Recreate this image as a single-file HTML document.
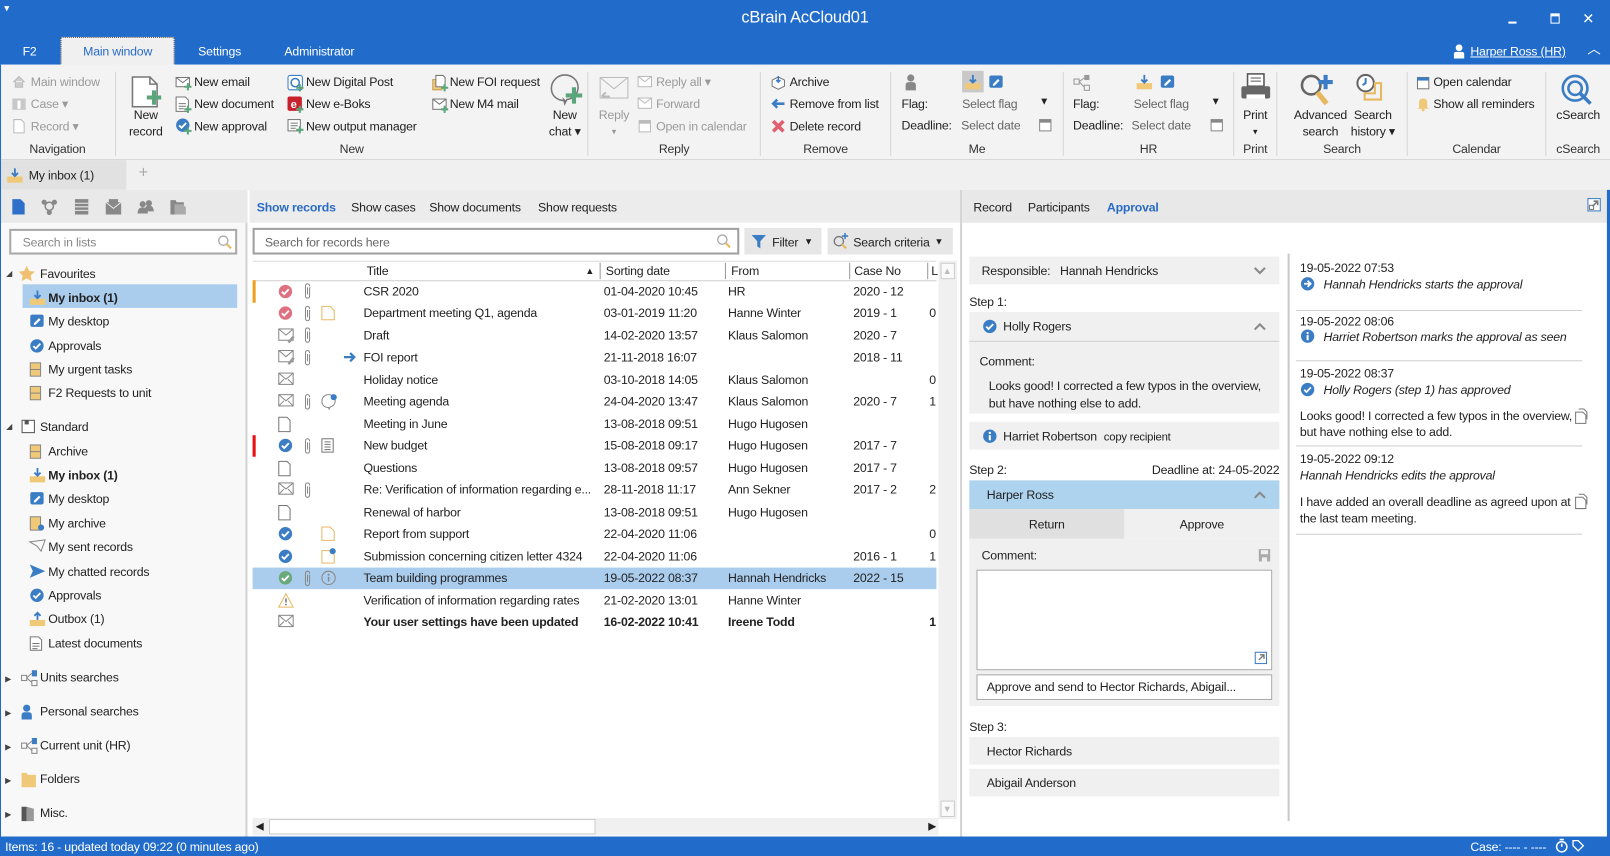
<!DOCTYPE html>
<html><head><meta charset="utf-8"><style>
*{margin:0;padding:0;box-sizing:border-box}
html,body{width:1610px;height:856px;overflow:hidden;background:#fff}
#w{position:absolute;left:0;top:0;width:1568px;height:834px;transform:scale(1.02679,1.02638);transform-origin:0 0;font-family:"Liberation Sans",sans-serif;font-size:12px;letter-spacing:-0.2px;color:#222}
.a{position:absolute}
.t{position:absolute;line-height:16px;white-space:nowrap}
.g{color:#9a9a9a}
.s{color:#666}
.b{font-weight:bold}
.sep{position:absolute;top:70px;width:1px;height:82px;background:#d6d6d6}
.gl{position:absolute;top:137px;line-height:16px;color:#333;text-align:center}
.box{position:absolute;background:#f0f0f0}
.hl{position:absolute;height:1px;background:#cfcfcf}
svg{position:absolute;overflow:visible}
</style></head><body><div id="w">

<!-- title bar -->
<div class="a" style="left:0;top:0;width:1568px;height:63px;background:#216cca"></div>
<div class="t" style="left:4px;top:1px;color:#fff;font-size:10px">▾</div>
<div class="t" style="left:0;width:1568px;text-align:center;top:10px;color:#fff;font-size:16px">cBrain AcCloud01</div>
<div class="a" style="left:1469px;top:21px;width:8px;height:2px;background:#fff"></div>
<div class="a" style="left:1510px;top:13px;width:9px;height:10px;border:1.5px solid #fff;border-top-width:3px"></div>
<div class="t" style="left:1541px;top:10px;color:#fff;font-size:14px">✕</div>
<div class="t" style="left:22px;top:42px;color:#fff">F2</div>
<div class="a" style="left:59px;top:36px;width:111px;height:28px;background:#f0f0f0;border:1px dotted #555;border-bottom:none"></div>
<div class="t" style="left:81px;top:42px;color:#2a6bc8">Main window</div>
<div class="t" style="left:193px;top:42px;color:#fff">Settings</div>
<div class="t" style="left:277px;top:42px;color:#fff">Administrator</div>
<svg style="left:1416px;top:43px" width="10" height="14"><circle cx="5" cy="3.5" r="3.3" fill="#fff"/><path d="M0 14V9.5Q0 7.5 2.5 7.5h5Q10 7.5 10 9.5V14z" fill="#fff"/></svg>
<div class="t" style="left:1432px;top:42px;color:#fff;text-decoration:underline">Harper Ross (HR)</div>
<div class="t" style="left:1546px;top:40px;color:#fff;font-size:13px">︿</div>

<!-- ribbon -->
<div class="a" style="left:0;top:63px;width:1568px;height:93px;background:#f3f3f3;border-bottom:1px solid #d5d5d5"></div>
<div class="sep" style="left:112px"></div><div class="sep" style="left:572px"></div><div class="sep" style="left:740px"></div><div class="sep" style="left:867px"></div><div class="sep" style="left:1035px"></div><div class="sep" style="left:1201px"></div><div class="sep" style="left:1243px"></div><div class="sep" style="left:1370px"></div><div class="sep" style="left:1505px"></div>
<div class="gl" style="left:0;width:112px">Navigation</div>
<div class="gl" style="left:113px;width:459px">New</div>
<div class="gl" style="left:573px;width:167px">Reply</div>
<div class="gl" style="left:741px;width:126px">Remove</div>
<div class="gl" style="left:868px;width:167px">Me</div>
<div class="gl" style="left:1036px;width:165px">HR</div>
<div class="gl" style="left:1202px;width:41px">Print</div>
<div class="gl" style="left:1244px;width:126px">Search</div>
<div class="gl" style="left:1371px;width:134px">Calendar</div>
<div class="gl" style="left:1506px;width:62px">cSearch</div>

<!-- navigation -->
<svg style="left:12px;top:73px" width="13" height="13"><path d="M1 7L6.5 1.5 12 7M3 6v6h7V6" fill="#ccc" stroke="#bbb"/></svg>
<div class="t g" style="left:30px;top:72px">Main window</div>
<svg style="left:12px;top:95px" width="13" height="13"><rect x="0" y="1" width="13" height="11" fill="#c8c8c8"/><rect x="5" y="3" width="3" height="8" fill="#fff"/></svg>
<div class="t g" style="left:30px;top:93px">Case ▾</div>
<svg style="left:13px;top:116px" width="11" height="14"><path d="M.5.5h7l3 3v10h-10z" fill="#fff" stroke="#bbb"/></svg>
<div class="t g" style="left:30px;top:115px">Record ▾</div>

<!-- new -->
<svg style="left:128px;top:74px" width="30" height="32"><path d="M1 1h17l7 7v22H1z" fill="#fff" stroke="#777" stroke-width="1.5"/><path d="M18 1v7h7" fill="none" stroke="#777" stroke-width="1.5"/><path d="M22 14v14M15 21h14" stroke="#5aa57a" stroke-width="4"/></svg>
<div class="t" style="left:120px;top:104px;width:44px;text-align:center">New</div>
<div class="t" style="left:120px;top:120px;width:44px;text-align:center">record</div>
<svg style="left:171px;top:74px" width="16" height="14"><rect x=".5" y="1.5" width="13" height="9" fill="#fff" stroke="#777"/><path d="M.5 1.5l6.5 5 6.5-5" fill="none" stroke="#777"/><path d="M12 7v7M8.5 10.5h7" stroke="#5aa57a" stroke-width="2"/></svg>
<div class="t" style="left:189px;top:72px">New email</div>
<svg style="left:171px;top:94px" width="16" height="16"><path d="M.5.5h9l3 3v11h-12z" fill="#fff" stroke="#777"/><path d="M3 7h7M3 9.5h7M3 12h5" stroke="#777"/><path d="M12 9v7M8.5 12.5h7" stroke="#5aa57a" stroke-width="2"/></svg>
<div class="t" style="left:189px;top:93px">New document</div>
<svg style="left:171px;top:115px" width="16" height="16"><circle cx="7" cy="7" r="6.5" fill="#3b7dc4"/><path d="M3.5 7.2l2.3 2.3 4.5-4.7" stroke="#fff" stroke-width="1.8" fill="none"/><path d="M12 9v7M8.5 12.5h7" stroke="#5aa57a" stroke-width="2"/></svg>
<div class="t" style="left:189px;top:115px">New approval</div>
<svg style="left:280px;top:73px" width="16" height="16"><rect x=".5" y=".5" width="14" height="14" rx="2" fill="#fff" stroke="#3b7dc4"/><circle cx="7.5" cy="7.5" r="4" fill="none" stroke="#3b7dc4" stroke-width="1.5"/><path d="M12 9v7M8.5 12.5h7" stroke="#5aa57a" stroke-width="2"/></svg>
<div class="t" style="left:298px;top:72px">New Digital Post</div>
<svg style="left:280px;top:94px" width="16" height="16"><rect x="0" y="0" width="14" height="14" rx="2" fill="#c8202d"/><text x="3" y="11" fill="#fff" font-size="11" font-family="Liberation Sans" font-weight="bold">e</text><path d="M12 9v7M8.5 12.5h7" stroke="#5aa57a" stroke-width="2"/></svg>
<div class="t" style="left:298px;top:93px">New e-Boks</div>
<svg style="left:280px;top:116px" width="16" height="14"><rect x=".5" y=".5" width="12" height="11" fill="#fff" stroke="#777"/><path d="M3 4h7M3 6.5h7M3 9h5" stroke="#777"/><path d="M12 7v7M8.5 10.5h7" stroke="#5aa57a" stroke-width="2"/></svg>
<div class="t" style="left:298px;top:115px">New output manager</div>
<svg style="left:421px;top:73px" width="16" height="16"><path d="M.5 4.5h9v10h-9z" fill="#f0c978" stroke="#c9a050"/><path d="M3.5.5h7l2 2v9h-9z" fill="#fff" stroke="#777"/><path d="M12 9v7M8.5 12.5h7" stroke="#5aa57a" stroke-width="2"/></svg>
<div class="t" style="left:438px;top:72px">New FOI request</div>
<svg style="left:421px;top:95px" width="16" height="15"><rect x=".5" y="1.5" width="13" height="10" fill="#fff" stroke="#777"/><path d="M.5 1.5l6.5 5 6.5-5" fill="none" stroke="#777"/><path d="M12 8v7M8.5 11.5h7" stroke="#5aa57a" stroke-width="2"/></svg>
<div class="t" style="left:438px;top:93px">New M4 mail</div>
<svg style="left:536px;top:72px" width="32" height="32"><path d="M14 26C6 26 1 21 1 14S7 1 14 1s13 5 13 12c0 6-4 11-11 12l-2 4-1-4z" fill="none" stroke="#777" stroke-width="1.5"/><path d="M23 13v16M15 21h16" stroke="#5aa57a" stroke-width="4"/></svg>
<div class="t" style="left:530px;top:104px;width:40px;text-align:center">New</div>
<div class="t" style="left:530px;top:120px;width:40px;text-align:center">chat ▾</div>

<!-- reply -->
<svg style="left:584px;top:75px" width="29" height="27"><rect x=".5" y=".5" width="27" height="20" fill="#f4f4f4" stroke="#bbb"/><path d="M.5 .5l13.5 11 13.5-11" fill="none" stroke="#bbb"/><path d="M2 19h8M2 19l4-4" stroke="#bbb" stroke-width="2" fill="none"/></svg>
<div class="t g" style="left:578px;top:104px;width:40px;text-align:center">Reply</div>
<div class="t g" style="left:578px;top:120px;width:40px;text-align:center;font-size:9px">▾</div>
<svg style="left:621px;top:74px" width="14" height="12"><rect x=".5" y=".5" width="13" height="10" fill="#fff" stroke="#bbb"/><path d="M.5 .5l6.5 5 6.5-5" fill="none" stroke="#bbb"/></svg>
<div class="t g" style="left:639px;top:72px">Reply all ▾</div>
<svg style="left:621px;top:95px" width="14" height="12"><rect x=".5" y=".5" width="13" height="10" fill="#fff" stroke="#bbb"/><path d="M.5 .5l6.5 5 6.5-5" fill="none" stroke="#bbb"/></svg>
<div class="t g" style="left:639px;top:93px">Forward</div>
<svg style="left:622px;top:115px" width="12" height="14"><rect x=".5" y="2.5" width="11" height="11" fill="#fff" stroke="#bbb"/><path d="M.5 2.5h11v3H.5z" fill="#bbb"/></svg>
<div class="t g" style="left:639px;top:115px">Open in calendar</div>

<!-- remove -->
<svg style="left:751px;top:73px" width="14" height="14"><path d="M1 5l6-3 6 3v6l-6 3-6-3z" fill="#fff" stroke="#777"/><path d="M7 1v6M5 5l2 2 2-2" stroke="#3b7dc4" fill="none" stroke-width="1.5"/></svg>
<div class="t" style="left:769px;top:72px">Archive</div>
<svg style="left:751px;top:96px" width="14" height="10"><path d="M13 5H2M6 1L2 5l4 4" stroke="#3b7dc4" stroke-width="2.5" fill="none"/></svg>
<div class="t" style="left:769px;top:93px">Remove from list</div>
<svg style="left:752px;top:117px" width="12" height="12"><path d="M1 1l10 10M11 1L1 11" stroke="#e06070" stroke-width="3.5"/></svg>
<div class="t" style="left:769px;top:115px">Delete record</div>

<!-- me -->
<svg style="left:882px;top:72px" width="10" height="16"><circle cx="5" cy="4" r="3.5" fill="#888"/><path d="M0 16v-5q0-3 3-3h4q3 0 3 3v5z" fill="#888"/></svg>
<div class="a" style="left:937px;top:69px;width:21px;height:21px;background:#c9c9c9"></div>
<svg style="left:940px;top:72px" width="15" height="15"><path d="M0 9h15v6H0z" fill="#f0c978"/><path d="M7.5 1v7M4.5 5.5l3 3 3-3" stroke="#3b7dc4" stroke-width="1.8" fill="none"/></svg>
<svg style="left:963px;top:73px" width="14" height="13"><rect x=".5" y=".5" width="13" height="12" rx="2" fill="#3b7dc4"/><path d="M4 9l5-5 1.5 1.5-5 5H4z" fill="#fff"/></svg>
<div class="t" style="left:878px;top:93px">Flag:</div>
<div class="t s" style="left:937px;top:93px">Select flag</div>
<div class="t" style="left:1012px;top:92px;font-size:10px">▼</div>
<div class="t" style="left:878px;top:114px">Deadline:</div>
<div class="t s" style="left:936px;top:114px">Select date</div>
<svg style="left:1012px;top:114px" width="12" height="14"><rect x=".5" y="2.5" width="11" height="11" fill="#fff" stroke="#888"/><path d="M.5 2.5h11v3H.5z" fill="#888"/></svg>
<!-- hr -->
<svg style="left:1046px;top:73px" width="16" height="15"><rect x="0" y="4" width="5" height="5" fill="none" stroke="#999"/><rect x="10" y="0" width="5" height="5" fill="#999"/><rect x="10" y="10" width="5" height="5" fill="none" stroke="#999"/><path d="M5 6.5L10 3M5 6.5L10 12" stroke="#999"/></svg>
<svg style="left:1107px;top:72px" width="15" height="15"><path d="M0 9h15v6H0z" fill="#f0c978"/><path d="M7.5 1v7M4.5 5.5l3 3 3-3" stroke="#3b7dc4" stroke-width="1.8" fill="none"/></svg>
<svg style="left:1130px;top:73px" width="14" height="13"><rect x=".5" y=".5" width="13" height="12" rx="2" fill="#3b7dc4"/><path d="M4 9l5-5 1.5 1.5-5 5H4z" fill="#fff"/></svg>
<div class="t" style="left:1045px;top:93px">Flag:</div>
<div class="t s" style="left:1104px;top:93px">Select flag</div>
<div class="t" style="left:1179px;top:92px;font-size:10px">▼</div>
<div class="t" style="left:1045px;top:114px">Deadline:</div>
<div class="t s" style="left:1102px;top:114px">Select date</div>
<svg style="left:1179px;top:114px" width="12" height="14"><rect x=".5" y="2.5" width="11" height="11" fill="#fff" stroke="#888"/><path d="M.5 2.5h11v3H.5z" fill="#888"/></svg>

<!-- print -->
<svg style="left:1209px;top:72px" width="28" height="28"><rect x="6" y="0" width="16" height="12" fill="#fff" stroke="#555" stroke-width="1.5"/><path d="M9 4h10M9 7h10" stroke="#555"/><rect x="0" y="12" width="28" height="12" rx="2" fill="#666"/><rect x="5" y="20" width="18" height="4" fill="#fff"/></svg>
<div class="t" style="left:1202px;top:104px;width:41px;text-align:center">Print</div>
<div class="t" style="left:1202px;top:120px;width:41px;text-align:center;font-size:9px">▾</div>

<!-- search -->
<svg style="left:1266px;top:71px" width="34" height="34"><circle cx="11" cy="12" r="9" fill="none" stroke="#666" stroke-width="2.5"/><path d="M17 19l9 11" stroke="#e8b860" stroke-width="5"/><path d="M25 2v14M18 9h14" stroke="#3b7dc4" stroke-width="4"/></svg>
<div class="t" style="left:1250px;top:104px;width:72px;text-align:center">Advanced</div>
<div class="t" style="left:1250px;top:120px;width:72px;text-align:center">search</div>
<svg style="left:1321px;top:71px" width="28" height="32"><circle cx="9" cy="10" r="8" fill="#fff" stroke="#666" stroke-width="2"/><path d="M9 5v5l-3 2" stroke="#3b7dc4" stroke-width="2" fill="none"/><path d="M18 10h6v16H8v-6h10z" fill="none" stroke="#e8b860" stroke-width="2"/></svg>
<div class="t" style="left:1310px;top:104px;width:54px;text-align:center">Search</div>
<div class="t" style="left:1310px;top:120px;width:54px;text-align:center">history ▾</div>

<!-- calendar -->
<svg style="left:1380px;top:73px" width="12" height="14"><rect x=".5" y="2.5" width="11" height="11" fill="#fff" stroke="#777"/><path d="M.5 2.5h11v3H.5z" fill="#3b7dc4"/></svg>
<div class="t" style="left:1396px;top:72px">Open calendar</div>
<svg style="left:1380px;top:94px" width="12" height="14"><path d="M2 11V6q0-4 4-4t4 4v5l2 1H0z" fill="#f0c978"/><circle cx="6" cy="13" r="1.5" fill="#f0c978"/></svg>
<div class="t" style="left:1396px;top:93px">Show all reminders</div>

<!-- csearch -->
<svg style="left:1520px;top:72px" width="32" height="32"><circle cx="14" cy="14" r="12" fill="none" stroke="#3b7dc4" stroke-width="2.5"/><circle cx="14" cy="14" r="6.5" fill="none" stroke="#3b7dc4" stroke-width="2.5"/><path d="M19 19l10 10" stroke="#3b7dc4" stroke-width="3.5"/></svg>
<div class="t" style="left:1506px;top:104px;width:62px;text-align:center">cSearch</div>

<!-- doc tabs row -->
<div class="a" style="left:0;top:156px;width:1568px;height:29px;background:#f0f0f0"></div>
<div class="a" style="left:0;top:156px;width:123px;height:29px;background:#e1e1e1"></div>
<svg style="left:7px;top:163px" width="15" height="15"><path d="M0 9h15v6H0z" fill="#f0c978"/><path d="M7.5 1v7M4.5 5.5l3 3 3-3" stroke="#3b7dc4" stroke-width="1.8" fill="none"/></svg>
<div class="t" style="left:28px;top:163px">My inbox (1)</div>
<div class="t" style="left:135px;top:161px;color:#aaa;font-size:16px">+</div>

<!-- LEFT PANEL -->
<div class="a" style="left:0;top:185px;width:241px;height:630px;background:#f8f8f8;border-right:2px solid #d4d4d4"></div>
<div class="a" style="left:0;top:185px;width:241px;height:32px;background:#e9e9e9"></div>
<svg style="left:12px;top:194px" width="12" height="15"><path d="M0 0h8l4 4v11H0z" fill="#2e70c9"/></svg>
<svg style="left:40px;top:194px" width="16" height="15"><circle cx="8" cy="7" r="4" fill="none" stroke="#888" stroke-width="1.5"/><circle cx="3" cy="3" r="2.5" fill="#888"/><circle cx="13" cy="3" r="2.5" fill="#888"/><circle cx="8" cy="13" r="2.5" fill="#888"/></svg>
<svg style="left:73px;top:194px" width="13" height="15"><rect width="13" height="15" fill="#888"/><path d="M0 4h13M0 7.5h13M0 11h13" stroke="#e9e9e9"/></svg>
<svg style="left:103px;top:194px" width="15" height="15"><rect x="0" y="3" width="15" height="12" fill="#888"/><path d="M0 3l7.5 6 7.5-6" stroke="#e9e9e9" fill="none"/><rect x="3" y="0" width="9" height="5" fill="#888"/></svg>
<svg style="left:134px;top:194px" width="16" height="14"><circle cx="5" cy="5" r="3" fill="#888"/><circle cx="11" cy="4" r="3" fill="#888"/><path d="M0 14q0-6 5-6t5 6zM7 12q0-6 4-6t5 6z" fill="#888"/></svg>
<svg style="left:166px;top:194px" width="15" height="15"><path d="M0 1h5l1 2h7v12H0z" fill="#888"/><path d="M4 5h8l3 3v7H4z" fill="#aaa"/></svg>
<div class="a" style="left:9px;top:223px;width:222px;height:25px;background:#fff;border:2px solid #a8a8a8"></div>
<div class="t" style="left:22px;top:228px;color:#888">Search in lists</div>
<svg style="left:212px;top:229px" width="14" height="14"><circle cx="5.5" cy="5.5" r="4.5" fill="none" stroke="#aaa" stroke-width="1.3"/><path d="M9 9l4 4" stroke="#e8b860" stroke-width="2"/></svg>

<div class="t" style="left:6px;top:259px;font-size:8px;color:#444">◢</div>
<svg style="left:18px;top:259px" width="16" height="15"><path d="M8 0l2.4 5 5.5.6-4 3.8 1 5.5L8 12.2 3.1 14.9l1-5.5-4-3.8 5.5-.6z" fill="#f0c070"/></svg>
<div class="t" style="left:39px;top:259px">Favourites</div>
<div class="a" style="left:22px;top:277px;width:209px;height:23px;background:#aacdee"></div>

<div class="t" style="left:6px;top:408px;font-size:8px;color:#444">◢</div>
<svg style="left:21px;top:409px" width="13" height="13"><rect x=".5" y=".5" width="12" height="12" fill="#fff" stroke="#555"/><rect x="3" y=".5" width="4" height="4" fill="#555"/></svg>
<div class="t" style="left:39px;top:408px">Standard</div>

<!-- CENTER -->
<div class="a" style="left:243px;top:185px;width:692px;height:32px;background:#ececec"></div>
<div class="t b" style="left:250px;top:194px;color:#2a6bc8">Show records</div>
<div class="t" style="left:342px;top:194px">Show cases</div>
<div class="t" style="left:418px;top:194px">Show documents</div>
<div class="t" style="left:524px;top:194px">Show requests</div>
<div class="a" style="left:246px;top:222px;width:474px;height:26px;background:#fff;border:2px solid #a0a0a0"></div>
<div class="t" style="left:258px;top:228px;color:#666">Search for records here</div>
<svg style="left:698px;top:228px" width="14" height="14"><circle cx="5.5" cy="5.5" r="4.5" fill="none" stroke="#aaa" stroke-width="1.3"/><path d="M9 9l4 4" stroke="#e8b860" stroke-width="2"/></svg>
<div class="a" style="left:725px;top:222px;width:75px;height:26px;background:#e6e6e6"></div>
<svg style="left:732px;top:229px" width="14" height="13"><path d="M0 0h14L8.5 6v7l-3-2V6z" fill="#3b7dc4"/></svg>
<div class="t" style="left:752px;top:228px">Filter</div>
<div class="t" style="left:783px;top:227px;font-size:9px">▼</div>
<div class="a" style="left:806px;top:222px;width:122px;height:26px;background:#e6e6e6"></div>
<svg style="left:811px;top:227px" width="16" height="16"><circle cx="6" cy="8" r="4.5" fill="none" stroke="#777" stroke-width="1.3"/><path d="M9 11l4 4" stroke="#e8b860" stroke-width="2"/><path d="M12 0v6M9 3h6" stroke="#3b7dc4" stroke-width="1.5"/></svg>
<div class="t" style="left:831px;top:228px">Search criteria</div>
<div class="t" style="left:910px;top:227px;font-size:9px">▼</div>

<div class="a" style="left:246px;top:254px;width:666px;height:20px;background:#fff;border-top:1px solid #ddd;border-bottom:1px solid #d0d0d0"></div>
<div class="t" style="left:357px;top:256px">Title</div>
<div class="t" style="left:570px;top:256px;font-size:9px">▲</div>
<div class="a" style="left:584px;top:256px;width:1px;height:16px;background:#999"></div>
<div class="t" style="left:590px;top:256px">Sorting date</div>
<div class="a" style="left:706px;top:256px;width:1px;height:16px;background:#999"></div>
<div class="t" style="left:712px;top:256px">From</div>
<div class="a" style="left:827px;top:256px;width:1px;height:16px;background:#999"></div>
<div class="t" style="left:832px;top:256px">Case No</div>
<div class="a" style="left:903px;top:256px;width:1px;height:16px;background:#999"></div>
<div class="t" style="left:907px;top:256px">L</div>

<!-- scrollbars -->
<div class="a" style="left:914px;top:254px;width:18px;height:544px;background:#f0f0f0"></div>
<div class="a" style="left:916px;top:256px;width:14px;height:16px;border:1px solid #ccc;background:#fafafa"></div>
<div class="t" style="left:918px;top:256px;font-size:9px;color:#bbb">▲</div>
<div class="a" style="left:916px;top:780px;width:14px;height:16px;border:1px solid #ccc;background:#fafafa"></div>
<div class="t" style="left:918px;top:780px;font-size:9px;color:#bbb">▼</div>
<div class="a" style="left:246px;top:797px;width:668px;height:17px;background:#f0f0f0"></div>
<div class="t" style="left:249px;top:798px;font-size:10px">◀</div>
<div class="a" style="left:262px;top:798px;width:318px;height:15px;background:#fff;border:1px solid #ccc"></div>
<div class="t" style="left:904px;top:798px;font-size:10px">▶</div>

<!-- RIGHT PANEL -->
<div class="a" style="left:935px;top:185px;width:2px;height:630px;background:#d4d4d4"></div>
<div class="a" style="left:937px;top:185px;width:631px;height:32px;background:#e8e8e8"></div>
<div class="t" style="left:948px;top:194px">Record</div>
<div class="t" style="left:1001px;top:194px">Participants</div>
<div class="t b" style="left:1078px;top:194px;color:#2a6bc8">Approval</div>
<svg style="left:1546px;top:193px" width="13" height="13"><rect x=".5" y=".5" width="12" height="12" fill="#fff" stroke="#3b7dc4"/><path d="M5 8l5-5M6 3h4v4" stroke="#777" fill="none" stroke-width="1.5"/><rect x="2" y="7" width="4" height="4" fill="none" stroke="#777"/></svg>
<div class="a" style="left:1565px;top:185px;width:3px;height:630px;background:#216cca"></div>

<div class="box" style="left:944px;top:250px;width:302px;height:27px"></div>
<div class="t" style="left:956px;top:256px">Responsible:&nbsp;&nbsp; Hannah Hendricks</div>
<svg style="left:1221px;top:260px" width="12" height="8"><path d="M1 1l5 5 5-5" stroke="#888" stroke-width="2" fill="none"/></svg>
<div class="t" style="left:944px;top:286px">Step 1:</div>
<div class="box" style="left:944px;top:304px;width:302px;height:99px"></div>
<div class="hl" style="left:944px;top:332px;width:302px;background:#d0d0d0"></div>
<svg style="left:957px;top:311px" width="14" height="14"><circle cx="7" cy="7" r="6.5" fill="#3b7dc4"/><path d="M3.5 7.2l2.3 2.3 4.5-4.7" stroke="#fff" stroke-width="1.8" fill="none"/></svg>
<div class="t" style="left:977px;top:310px">Holly Rogers</div>
<svg style="left:1221px;top:314px" width="12" height="8"><path d="M1 7l5-5 5 5" stroke="#888" stroke-width="2" fill="none"/></svg>
<div class="t" style="left:954px;top:344px">Comment:</div>
<div class="t" style="left:963px;top:368px">Looks good! I corrected a few typos in the overview,</div>
<div class="t" style="left:963px;top:385px">but have nothing else to add.</div>
<div class="box" style="left:944px;top:411px;width:302px;height:27px"></div>
<svg style="left:957px;top:418px" width="14" height="14"><circle cx="7" cy="7" r="6.5" fill="#3b7dc4"/><rect x="6" y="6" width="2" height="5" fill="#fff"/><circle cx="7" cy="3.8" r="1.2" fill="#fff"/></svg>
<div class="t" style="left:977px;top:417px">Harriet Robertson</div>
<div class="t" style="left:1075px;top:418px;font-size:11px">copy recipient</div>
<div class="t" style="left:944px;top:450px">Step 2:</div>
<div class="t" style="left:1046px;width:200px;text-align:right;top:450px">Deadline at: 24-05-2022</div>
<div class="a" style="left:944px;top:468px;width:302px;height:28px;background:#aed3ef"></div>
<div class="t" style="left:961px;top:474px">Harper Ross</div>
<svg style="left:1221px;top:478px" width="12" height="8"><path d="M1 7l5-5 5 5" stroke="#888" stroke-width="2" fill="none"/></svg>
<div class="a" style="left:944px;top:496px;width:151px;height:29px;background:#e0e0e0"></div>
<div class="box" style="left:1095px;top:496px;width:151px;height:29px"></div>
<div class="t" style="left:944px;width:151px;text-align:center;top:503px">Return</div>
<div class="t" style="left:1095px;width:151px;text-align:center;top:503px">Approve</div>
<div class="box" style="left:944px;top:525px;width:302px;height:163px"></div>
<div class="t" style="left:956px;top:533px">Comment:</div>
<svg style="left:1226px;top:535px" width="11" height="12"><rect width="11" height="12" fill="#aaa"/><rect x="2" y="1" width="7" height="4" fill="#f0f0f0"/><rect x="3" y="8" width="5" height="4" fill="#f0f0f0"/></svg>
<div class="a" style="left:951px;top:555px;width:288px;height:98px;background:#fff;border:1px solid #aaa"></div>
<svg style="left:1222px;top:635px" width="12" height="12"><rect x=".5" y=".5" width="11" height="11" fill="#fff" stroke="#3b7dc4"/><path d="M4 8l5-5M5 3h4v4" stroke="#777" fill="none" stroke-width="1.3"/></svg>
<div class="a" style="left:951px;top:657px;width:288px;height:25px;background:#fff;border:1px solid #aaa"></div>
<div class="t" style="left:961px;top:661px">Approve and send to Hector Richards, Abigail...</div>
<div class="t" style="left:944px;top:700px">Step 3:</div>
<div class="box" style="left:944px;top:718px;width:302px;height:27px"></div>
<div class="t" style="left:961px;top:724px">Hector Richards</div>
<div class="box" style="left:944px;top:749px;width:302px;height:27px"></div>
<div class="t" style="left:961px;top:755px">Abigail Anderson</div>

<div class="a" style="left:1254px;top:247px;width:2px;height:553px;background:#c8c8c8"></div>
<div class="t" style="left:1266px;top:253px">19-05-2022 07:53</div>
<svg style="left:1267px;top:270px" width="13" height="13"><circle cx="6.5" cy="6.5" r="6.5" fill="#3b7dc4"/><path d="M3 6.5h6M6.5 3.5l3 3-3 3" stroke="#fff" stroke-width="1.7" fill="none"/></svg>
<div class="t" style="left:1289px;top:269px;font-style:italic">Hannah Hendricks starts the approval</div>
<div class="hl" style="left:1262px;top:302px;width:279px"></div>
<div class="t" style="left:1266px;top:305px">19-05-2022 08:06</div>
<svg style="left:1267px;top:321px" width="13" height="13"><circle cx="6.5" cy="6.5" r="6.5" fill="#3b7dc4"/><rect x="5.5" y="5.5" width="2" height="5" fill="#fff"/><circle cx="6.5" cy="3.5" r="1.1" fill="#fff"/></svg>
<div class="t" style="left:1289px;top:320px;font-style:italic">Harriet Robertson marks the approval as seen</div>
<div class="hl" style="left:1262px;top:351px;width:279px"></div>
<div class="t" style="left:1266px;top:356px">19-05-2022 08:37</div>
<svg style="left:1267px;top:373px" width="13" height="13"><circle cx="6.5" cy="6.5" r="6.5" fill="#3b7dc4"/><path d="M3.2 6.7l2.2 2.2 4.3-4.5" stroke="#fff" stroke-width="1.7" fill="none"/></svg>
<div class="t" style="left:1289px;top:372px;font-style:italic">Holly Rogers (step 1) has approved</div>
<div class="t" style="left:1266px;top:397px;width:266px;overflow:hidden">Looks good! I corrected a few typos in the overview,</div>
<div class="t" style="left:1266px;top:413px">but have nothing else to add.</div>
<svg style="left:1534px;top:398px" width="12" height="15"><path d="M.5 3.5h7l3 3v8h-10z" fill="#fff" stroke="#777"/><path d="M3.5.5h5l3 3v7" fill="none" stroke="#777"/></svg>
<div class="hl" style="left:1262px;top:434px;width:279px"></div>
<div class="t" style="left:1266px;top:439px">19-05-2022 09:12</div>
<div class="t" style="left:1266px;top:455px;font-style:italic">Hannah Hendricks edits the approval</div>
<div class="t" style="left:1266px;top:481px;width:266px;overflow:hidden">I have added an overall deadline as agreed upon at</div>
<div class="t" style="left:1266px;top:497px">the last team meeting.</div>
<svg style="left:1534px;top:481px" width="12" height="15"><path d="M.5 3.5h7l3 3v8h-10z" fill="#fff" stroke="#777"/><path d="M3.5.5h5l3 3v7" fill="none" stroke="#777"/></svg>
<div class="hl" style="left:1262px;top:520px;width:279px"></div>

<!-- window borders -->
<div class="a" style="left:0;top:63px;width:1px;height:752px;background:#216cca"></div>
<!-- status bar -->
<div class="a" style="left:0;top:815px;width:1568px;height:19px;background:#216cca"></div>
<div class="t" style="left:5px;top:817px;color:#fff">Items: 16 - updated today 09:22 (0 minutes ago)</div>
<div class="t" style="left:1432px;top:817px;color:#fff">Case: ---- - ----</div>
<svg style="left:1515px;top:816px" width="28" height="16"><circle cx="6" cy="9" r="5" fill="none" stroke="#fff" stroke-width="1.5"/><path d="M4 2h4M6 9V6" stroke="#fff" stroke-width="1.5"/><path d="M17 3h5l5 5-5 5-5-5z" fill="none" stroke="#fff" stroke-width="1.3"/></svg>

<script>
(function(){
var W=document.getElementById('w');
function T(x,y,s,cls,st){var d=document.createElement('div');d.className='t '+(cls||'');d.style.left=x+'px';d.style.top=(y-8)+'px';if(st)d.style.cssText+=st;d.innerHTML=s;W.appendChild(d);return d;}
function S(x,y,svg){var d=document.createElement('div');d.className='a';d.style.left=x+'px';d.style.top=y+'px';d.innerHTML=svg;W.appendChild(d);}
var inbox='<svg width="15" height="14"><path d="M0 8h15v6H0z" fill="#f0c978"/><path d="M7.5 0v7M4.5 4.5l3 3 3-3" stroke="#3b7dc4" stroke-width="1.8" fill="none"/></svg>';
var outbox='<svg width="15" height="14"><path d="M0 8h15v6H0z" fill="#f0c978"/><path d="M7.5 8V1M4.5 4l3-3 3 3" stroke="#3b7dc4" stroke-width="1.8" fill="none"/></svg>';
var desk='<svg width="14" height="13"><rect x=".5" y=".5" width="13" height="12" rx="2" fill="#3b7dc4"/><path d="M4 9l5-5 1.5 1.5-5 5H4z" fill="#fff"/></svg>';
var chk='<svg width="14" height="14"><circle cx="7" cy="7" r="6.5" fill="#3b7dc4"/><path d="M3.5 7.2l2.3 2.3 4.5-4.7" stroke="#fff" stroke-width="1.8" fill="none"/></svg>';
var cab='<svg width="11" height="14"><rect x=".5" y=".5" width="10" height="13" fill="#f0c978" stroke="#888"/><path d="M.5 7h10" stroke="#888"/></svg>';
var arc='<svg width="14" height="14"><rect x=".5" y=".5" width="10" height="13" fill="#f0c978" stroke="#888"/><circle cx="11" cy="11" r="3" fill="#3b7dc4"/></svg>';
var sent='<svg width="15" height="12"><path d="M0 2l15-2-4 11-4-5z" fill="none" stroke="#888"/></svg>';
var chat='<svg width="15" height="13"><path d="M0 0l15 6.5L0 13l3-6.5z" fill="#3b7dc4"/></svg>';
var doc='<svg width="12" height="14"><path d="M.5.5h8l3 3v10h-11z" fill="#fff" stroke="#777"/><path d="M2.5 7h7M2.5 9.5h7M2.5 12h5" stroke="#777"/></svg>';
var tri='<span style="font-size:8px;color:#444">▶</span>';
var unit='<svg width="15" height="15"><rect x="0" y="5" width="5" height="5" fill="none" stroke="#888"/><rect x="10" y="0" width="5" height="6" fill="#3b7dc4"/><rect x="10" y="10" width="5" height="5" fill="none" stroke="#888"/><path d="M5 7.5L10 3M5 7.5L10 12" stroke="#888"/></svg>';
var pers='<svg width="10" height="15"><circle cx="5" cy="4" r="3.5" fill="#3b7dc4"/><path d="M0 15v-4q0-3 3-3h4q3 0 3 3v4z" fill="#3b7dc4"/></svg>';
var fold='<svg width="14" height="15"><path d="M0 1h5l1 2h8v12H0z" fill="#f0c978"/></svg>';
var misc='<svg width="12" height="15"><path d="M0 1h5v14H0z" fill="#555"/><path d="M5 1l7 2v12H5z" fill="#999"/></svg>';
var fav=[[inbox,'My inbox (1)',1],[desk,'My desktop'],[chk,'Approvals'],[cab,'My urgent tasks'],[cab,'F2 Requests to unit']];
var fy=[290,313,337,360,383];
fav.forEach(function(f,i){S(29,fy[i]-7,f[0]);T(47,fy[i],f[1],f[2]?'b':'');});
var std=[[cab,'Archive'],[inbox,'My inbox (1)',1],[desk,'My desktop'],[arc,'My archive'],[sent,'My sent records'],[chat,'My chatted records'],[chk,'Approvals'],[outbox,'Outbox (1)'],[doc,'Latest documents']];
var sy=[440,463,486,510,533,557,580,603,627];
std.forEach(function(f,i){S(29,sy[i]-7,f[0]);T(47,sy[i],f[1],f[2]?'b':'');});
var grp=[[unit,'Units searches',660],[pers,'Personal searches',693],[unit,'Current unit (HR)',726],[fold,'Folders',759],[misc,'Misc.',792]];
grp.forEach(function(g){T(5,g[2],tri);S(21,g[2]-7,g[0]);T(39,g[2],g[1]);});

function ck(c){return '<svg width="14" height="14"><circle cx="7" cy="7" r="6.5" fill="'+c+'"/><path d="M3.5 7.2l2.3 2.3 4.5-4.7" stroke="#fff" stroke-width="1.8" fill="none"/></svg>';}
var env='<svg width="15" height="12"><rect x=".5" y=".5" width="14" height="11" fill="#fff" stroke="#888"/><path d="M.5 .5l7 6 7-6M.5 11.5l5-5M14.5 11.5l-5-5" fill="none" stroke="#888"/></svg>';
var envd='<svg width="16" height="14"><rect x=".5" y=".5" width="14" height="11" fill="#fff" stroke="#888"/><path d="M.5 .5l7 6 7-6" fill="none" stroke="#888"/><path d="M9 13l5-6 2 1.5-5 6z" fill="#999"/></svg>';
var pg='<svg width="12" height="15"><path d="M.5.5h8l3 3v11h-11z" fill="#fff" stroke="#777"/></svg>';
var warn='<svg width="15" height="14"><path d="M7.5 .5L14.5 13.5H.5z" fill="#fff" stroke="#e8b860"/><path d="M7.5 5v4" stroke="#777" stroke-width="1.5"/><circle cx="7.5" cy="11" r=".9" fill="#777"/></svg>';
var clip='<svg width="8" height="15"><path d="M5.5 4v8q0 2.5-2 2.5T1.5 12V3q0-2.5 2-2.5t2 2.5" fill="none" stroke="#888"/><path d="M3.5 4v7" stroke="#888"/></svg>';
var note='<svg width="13" height="14"><path d="M.5.5h8l4 4v9h-12z" fill="#fff" stroke="#e8b860"/></svg>';
var noted='<svg width="14" height="15"><path d="M.5 2.5h8l4 4v8h-12z" fill="#fff" stroke="#e8b860"/><circle cx="11" cy="3" r="3" fill="#3b7dc4"/></svg>';
var bub='<svg width="15" height="15"><path d="M7 13C3 13 .5 10.5 .5 7S3 .5 7 .5s6.5 2.5 6.5 6c0 3-2 5.5-5 6l-1 2z" fill="none" stroke="#888"/><circle cx="12" cy="3" r="3" fill="#3b7dc4"/></svg>';
var list='<svg width="12" height="14"><rect x=".5" y=".5" width="11" height="13" fill="#fff" stroke="#777"/><path d="M3 3.5h6M3 6h6M3 8.5h6M3 11h6" stroke="#777"/></svg>';
var info='<svg width="14" height="14"><circle cx="7" cy="7" r="6.5" fill="none" stroke="#888"/><rect x="6.3" y="6" width="1.4" height="4.5" fill="#888"/><circle cx="7" cy="4" r="1" fill="#888"/></svg>';
var arr='<svg width="13" height="10"><path d="M0 5h9M6 1l4 4-4 4" stroke="#3b7dc4" stroke-width="2.2" fill="none"/></svg>';
var R='#e07080',B='#3b7dc4',G='#6aaa7a';
var rows=[
['#f0a020',ck(R),1,'',0,'CSR 2020','01-04-2020 10:45','HR','2020 - 12',''],
['',ck(R),1,note,0,'Department meeting Q1, agenda','03-01-2019 11:20','Hanne Winter','2019 - 1','0:'],
['',envd,1,'',0,'Draft','14-02-2020 13:57','Klaus Salomon','2020 - 7',''],
['',envd,1,'',1,'FOI report','21-11-2018 16:07','','2018 - 11',''],
['',env,0,'',0,'Holiday notice','03-10-2018 14:05','Klaus Salomon','','0:'],
['',env,1,bub,0,'Meeting agenda','24-04-2020 13:47','Klaus Salomon','2020 - 7','1:'],
['',pg,0,'',0,'Meeting in June','13-08-2018 09:51','Hugo Hugosen','',''],
['#e81010',ck(B),1,list,0,'New budget','15-08-2018 09:17','Hugo Hugosen','2017 - 7',''],
['',pg,0,'',0,'Questions','13-08-2018 09:57','Hugo Hugosen','2017 - 7',''],
['',env,1,'',0,'Re: Verification of information regarding e...','28-11-2018 11:17','Ann Sekner','2017 - 2','2:'],
['',pg,0,'',0,'Renewal of harbor','13-08-2018 09:51','Hugo Hugosen','',''],
['',ck(B),0,note,0,'Report from support','22-04-2020 11:06','','','0'],
['',ck(B),0,noted,0,'Submission concerning citizen letter 4324','22-04-2020 11:06','','2016 - 1','1'],
['',ck(G),1,info,0,'Team building programmes','19-05-2022 08:37','Hannah Hendricks','2022 - 15',''],
['',warn,0,'',0,'Verification of information regarding rates','21-02-2020 13:01','Hanne Winter','',''],
['',env,0,'',0,'Your user settings have been updated','16-02-2022 10:41','Ireene Todd','','1(']
];
rows.forEach(function(r,i){
 var top=273+21.5*i,c=top+10.75;
 if(i==13){var s=document.createElement('div');s.className='a';s.style.cssText='left:246px;top:'+top+'px;width:666px;height:21.5px;background:#aacdee';W.appendChild(s);}
 if(r[0]){var f=document.createElement('div');f.className='a';f.style.cssText='left:246px;top:'+top+'px;width:3px;height:21.5px;background:'+r[0];W.appendChild(f);}
 S(271,c-7,r[1]);
 if(r[2])S(296,c-7.5,clip);
 if(r[3])S(313,c-7.5,r[3]);
 if(r[4])S(335,c-5,arr);
 var bc=(i==15)?'b':'';
 T(354,c,r[5],bc);T(588,c,r[6],bc);T(709,c,r[7],bc);T(831,c,r[8],bc);
 var l=T(905,c,r[9],bc);l.style.width='7px';l.style.overflow='hidden';
});
})();
</script>
</div></body></html>
